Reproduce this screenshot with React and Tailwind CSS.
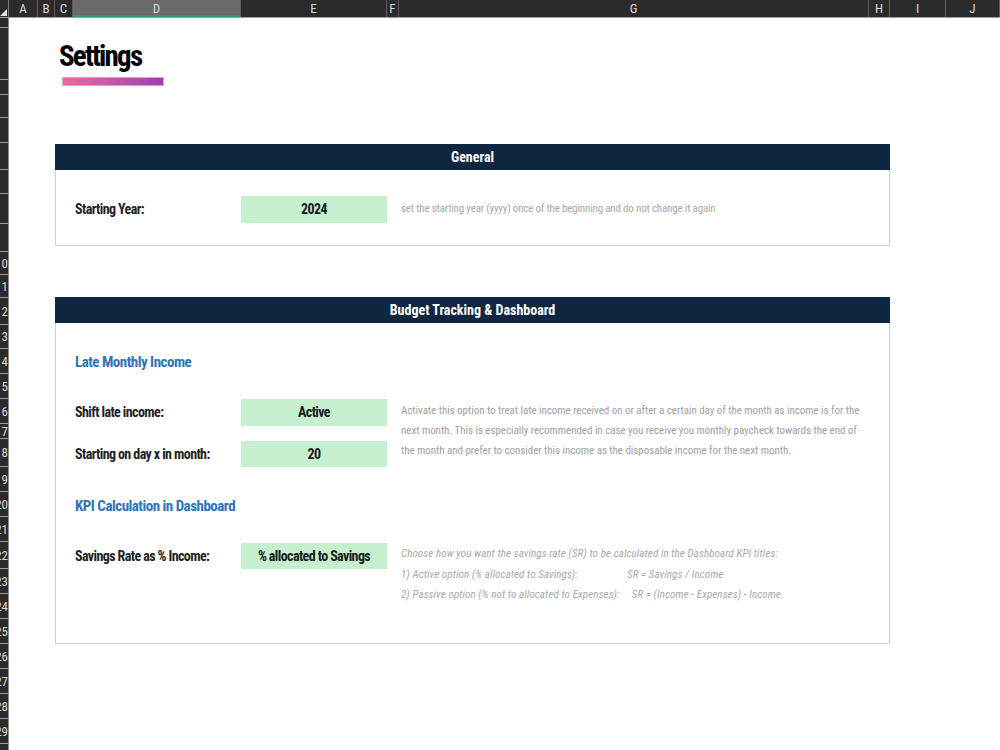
import React from "react"

const cols = [
  { id: "A", w: "w-[29px]" },
  { id: "B", w: "w-[17px]" },
  { id: "C", w: "w-[18px]" },
  { id: "D", w: "w-[168px]", active: true },
  { id: "E", w: "w-[146px]" },
  { id: "F", w: "w-[12px]" },
  { id: "G", w: "w-[470px]" },
  { id: "H", w: "w-[21px]" },
  { id: "I", w: "w-[56px]" },
  { id: "J", w: "w-[54px]" },
]

// row heights of the sheet, top to bottom
const rows = [
  "h-[10px]", "h-[52px]", "h-[15px]", "h-[23px]", "h-[25px]", "h-[27px]", "h-[24px]", "h-[30px]",
  "h-[28px]", "h-[23px]", "h-[23px]", "h-[27px]", "h-[24px]", "h-[25px]", "h-[25px]", "h-[25px]",
  "h-[15px]", "h-[28px]", "h-[25px]", "h-[25px]", "h-[25px]", "h-[27px]", "h-[25px]", "h-[25px]",
  "h-[25px]", "h-[25px]", "h-[25px]", "h-[25px]", "h-[25px]",
]

function ColumnHeader() {
  return (
    <div className="flex h-[18px] shrink-0 bg-[#2b2b2b] border-b border-[#a0a0a0] text-[#d8d8d8] text-[13px] leading-[17px]">
      <div className="relative w-[9px] shrink-0 border-r border-[#7a7a7a]">
        <div className="absolute right-[1px] bottom-[1px] w-0 h-0 border-l-[7px] border-l-transparent border-b-[7px] border-b-[#e6e6e6]" />
      </div>
      {cols.map((c) => (
        <div
          key={c.id}
          className={
            "shrink-0 text-center border-r border-[#5e5e5e] " +
            c.w +
            (c.active ? " bg-[#6a6a6a] border-b-2 border-b-[#21a366]" : "")
          }
        >
          {c.id}
        </div>
      ))}
    </div>
  )
}

function RowHeader() {
  return (
    <div className="w-[9px] shrink-0 bg-[#2b2b2b] flex flex-col text-[#d8d8d8] text-[13px] border-r border-[#8a8a8a]">
      {rows.map((h, i) => (
        <div
          key={i}
          className={"shrink-0 overflow-hidden border-b border-[#9a9a9a] flex items-center justify-end leading-none " + h}
        >
          <span className={"whitespace-nowrap " + (i < 9 ? "mr-[-6px] text-[#7a3030]" : "mr-[0px]")}>{i + 1}</span>
        </div>
      ))}
    </div>
  )
}

function PanelHeader({ children }) {
  return (
    <div className="h-[26px] bg-[#0f2640] text-white font-bold text-[14px] flex items-center justify-center">
      {children}
    </div>
  )
}

function ValueBox({ children, h = "h-[27px]" }) {
  return (
    <div className={"w-[146px] shrink-0 bg-[#c6efce] text-[#1a1a1a] font-bold text-[14px] tracking-[-0.6px] whitespace-nowrap flex items-center justify-center " + h}>
      {children}
    </div>
  )
}

function Label({ children }) {
  return (
    <div className="w-[166px] shrink-0 font-bold text-[14px] tracking-[-0.6px] text-[#1f1f1f] whitespace-nowrap">
      {children}
    </div>
  )
}

export default function App() {
  return (
    <div className="w-[1000px] h-[750px] overflow-hidden bg-white flex flex-col font-['Roboto_Condensed','Open_Sans',sans-serif]">
      <ColumnHeader />
      <div className="flex flex-1 min-h-0">
        <RowHeader />
        <div className="flex-1 pl-[46px] pt-[22px]">
          <h1 className="text-[29px] leading-[32px] font-bold text-black ml-[4px] tracking-[-1.8px]">Settings</h1>
          <div className="mt-[5px] ml-[7px] w-[102px] h-[9px] bg-gradient-to-r from-[#ec6b9c] to-[#9c3fb2] border border-[#d9a0c8]" />

          <div className="mt-[58px] w-[835px]">
            <PanelHeader>General</PanelHeader>
            <div className="h-[76px] border-x border-b border-[#cfcfcf] pl-[19px] pt-[26px]">
              <div className="flex items-center">
                <Label>Starting Year:</Label>
                <ValueBox>2024</ValueBox>
                <div className="ml-[14px] text-[11px] text-[#a8a8a8] tracking-[-0.18px] whitespace-nowrap">
                  set the starting year (yyyy) once of the beginning and do not change it again
                </div>
              </div>
            </div>
          </div>

          <div className="mt-[51px] w-[835px]">
            <PanelHeader>Budget Tracking &amp; Dashboard</PanelHeader>
            <div className="h-[321px] border-x border-b border-[#cfcfcf] pl-[19px] pt-[29px]">
              <div className="text-[15px] leading-[20px] font-bold text-[#2e75b6] tracking-[-0.5px]">Late Monthly Income</div>

              <div className="flex mt-[27px]">
                <div className="flex flex-col gap-[15px]">
                  <div className="flex items-center">
                    <Label>Shift late income:</Label>
                    <ValueBox>Active</ValueBox>
                  </div>
                  <div className="flex items-center">
                    <Label>Starting on day x in month:</Label>
                    <ValueBox h="h-[26px]">20</ValueBox>
                  </div>
                </div>
                <div className="ml-[14px] mt-[2px] text-[11px] leading-[20px] text-[#a0a0a0] tracking-[-0.04px] whitespace-nowrap">
                  Activate this option to treat late income received on or after a certain day of the month as income is for the
                  <br />
                  next month. This is especially recommended in case you receive you monthly paycheck towards the end of
                  <br />
                  the month and prefer to consider this income as the disposable income for the next month.
                </div>
              </div>

              <div className="mt-[29px] text-[15px] leading-[20px] font-bold text-[#2e75b6] tracking-[-0.5px]">KPI Calculation in Dashboard</div>

              <div className="flex mt-[27px]">
                <div className="flex items-start">
                  <Label>
                    <div className="h-[26px] flex items-center">Savings Rate as % Income:</div>
                  </Label>
                  <ValueBox h="h-[26px]">% allocated to Savings</ValueBox>
                </div>
                <div className="ml-[14px] mt-[1px] text-[11px] leading-[20.5px] italic text-[#a8a8a8] tracking-[0.1px] whitespace-nowrap">
                  <div>Choose how you want the savings rate (SR) to be calculated in the Dashboard KPI titles:</div>
                  <div>
                    <span className="inline-block w-[226px]">1) Active option (% allocated to Savings):</span>
                    <span>SR = Savings / Income</span>
                  </div>
                  <div>
                    <span>2) Passive option (% not to allocated to Expenses):</span>
                    <span className="ml-[12px]">SR = (Income - Expenses) - Income.</span>
                  </div>
                </div>
              </div>
            </div>
          </div>
        </div>
      </div>
    </div>
  )
}
